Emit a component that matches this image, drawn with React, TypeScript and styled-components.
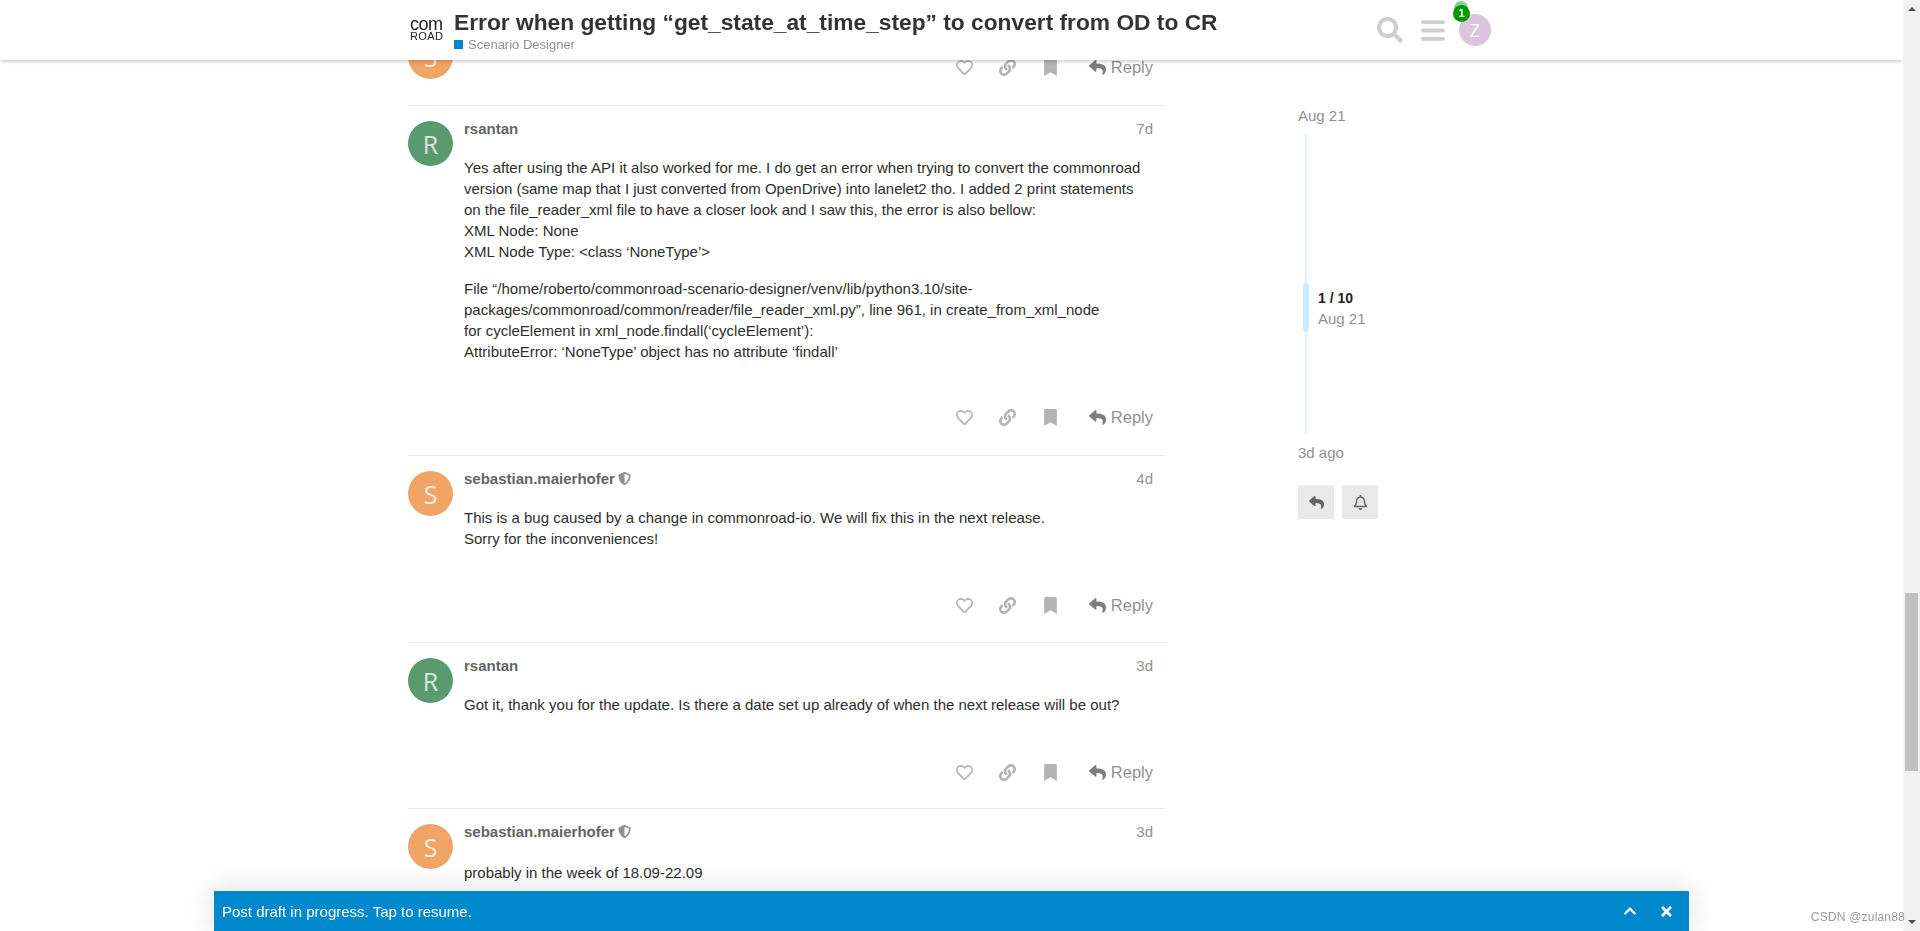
import React from "react";
import styled, { createGlobalStyle } from "styled-components";
import {
  FaBars,
  FaBookmark,
  FaChevronUp,
  FaLink,
  FaRegBell,
  FaRegHeart,
  FaReply,
  FaSearch,
  FaShieldAlt,
  FaTimes,
} from "react-icons/fa";

const GlobalStyle = createGlobalStyle`
  html, body {
    margin: 0;
    height: 100%;
    overflow: hidden;
    background: #fff;
    font-family: "Liberation Sans", Arial, sans-serif;
    color: #222;
  }
`;

const Shell = styled.div`
  display: flex;
  height: 100vh;
  overflow: hidden;
`;

const Viewport = styled.div`
  flex: 1;
  min-width: 0;
  overflow: hidden;
`;

const Page = styled.div`
  display: flex;
  align-items: flex-start;
  padding: 18px 0 0 408px;
`;

const Header = styled.header`
  position: fixed;
  top: 0;
  left: 0;
  right: 17px;
  height: 60px;
  z-index: 5;
  display: flex;
  align-items: center;
  padding-left: 408px;
  background: #fff;
  box-shadow: 0 2px 4px -1px rgba(0, 0, 0, 0.25);
`;

const Logo = styled.svg`
  width: 46px;
  height: 30px;
  flex: none;
`;

const TitleBlock = styled.div`
  flex: 1;
`;

const Title = styled.div`
  font-size: 22.75px;
  font-weight: 700;
  line-height: 28px;
  color: #333;
`;

const Category = styled.div`
  display: flex;
  align-items: center;
  gap: 5px;
  font-size: 13px;
  line-height: 17px;
  color: #919191;
`;

const CategorySwatch = styled.span`
  width: 9px;
  height: 9px;
  background: #0088cc;
`;

const HeaderIcons = styled.div`
  display: flex;
  align-items: center;
  margin-right: 412px;
  color: #cfcfcf;
`;

const SearchButton = styled(FaSearch)`
  width: 26px;
  height: 26px;
  margin-right: 18px;
`;

const MenuButton = styled(FaBars)`
  width: 24px;
  height: 27px;
  margin-right: 14px;
`;

const UserAvatar = styled.div`
  position: relative;
  width: 32px;
  height: 32px;
  border-radius: 50%;
  background: #dcc3de;
  color: #fff;
  display: flex;
  align-items: center;
  justify-content: center;
  font-family: "Open Sans", sans-serif;
  font-size: 18px;
`;

const BadgeGlow = styled.span`
  position: absolute;
  top: -13px;
  left: -5px;
  width: 14px;
  height: 14px;
  border-radius: 50%;
  background: #8fce8f;
`;

const Badge = styled.span`
  position: absolute;
  top: -9px;
  left: -6px;
  width: 17px;
  height: 17px;
  border-radius: 50%;
  background: #009900;
  color: #fff;
  font-family: "Liberation Sans", sans-serif;
  font-size: 11px;
  font-weight: 700;
  line-height: 17px;
  text-align: center;
`;

const PostList = styled.main`
  width: 758px;
  flex: none;
`;

const Post = styled.article<{ $first?: boolean }>`
  display: flex;
  gap: 11px;
  padding: ${(p) => (p.$first ? "16px 13px 18px 0" : "15px 13px 19px 0")};
  border-top: ${(p) => (p.$first ? "none" : "1px solid #e9e9e9")};
`;

const Avatar = styled.div<{ $color: string }>`
  width: 45px;
  height: 45px;
  flex: none;
  border-radius: 50%;
  background: ${(p) => p.$color};
  color: rgba(255, 255, 255, 0.8);
  display: flex;
  align-items: center;
  justify-content: center;
  font-family: "Open Sans", sans-serif;
  font-size: 25px;
`;

const PostBody = styled.div`
  flex: 1;
  min-width: 0;
`;

const PostMeta = styled.div<{ $after?: number }>`
  display: flex;
  align-items: center;
  justify-content: space-between;
  height: 14px;
  margin-bottom: ${(p) => p.$after ?? 22}px;
`;

const Author = styled.div`
  display: flex;
  align-items: center;
  gap: 3px;
  font-size: 15px;
  font-weight: 700;
  color: #646464;
`;

const StaffShield = styled(FaShieldAlt)`
  width: 13px;
  height: 13px;
  color: #919191;
`;

const PostDate = styled.span`
  font-size: 15px;
  color: #919191;
`;

const Cooked = styled.div<{ $gap?: number }>`
  font-size: 15px;
  line-height: 21px;
  color: #2e2e2e;
  margin-bottom: ${(p) => 34 + (p.$gap ?? 0)}px;

  p {
    margin: 0 0 16px;
  }

  p:last-child {
    margin-bottom: 0;
  }
`;

const Actions = styled.div<{ $top?: number; $bottom?: number }>`
  display: flex;
  align-items: center;
  justify-content: flex-end;
  height: 40px;
  margin-top: ${(p) => p.$top ?? 0}px;
  margin-bottom: ${(p) => p.$bottom ?? 0}px;
  color: #b4b4b4;
`;

const LikeIcon = styled(FaRegHeart)`
  width: 17px;
  height: 17px;
  margin-right: 26px;
`;

const LinkIcon = styled(FaLink)`
  width: 17px;
  height: 17px;
  margin-right: 28px;
`;

const BookmarkIcon = styled(FaBookmark)`
  width: 13px;
  height: 17px;
  margin-right: 32px;
`;

const ReplyButton = styled.div`
  display: flex;
  align-items: center;
  gap: 5px;
  font-size: 16.5px;
  color: #919191;
`;

const ReplyIcon = styled(FaReply)`
  width: 17px;
  height: 17px;
  color: #7d7d7d;
`;

const Timeline = styled.aside`
  margin: 87px 0 0 132px;
  width: 160px;
  font-size: 15px;
  line-height: 21px;
  color: #919191;
`;

const Rail = styled.div`
  position: relative;
  width: 2px;
  height: 299px;
  margin: 8px 0 9px 7px;
  background: #dcf1fb;
`;

const RailHandle = styled.div`
  position: absolute;
  top: 149px;
  left: -2px;
  width: 6px;
  height: 49px;
  border-radius: 3px;
  background: #c9edff;
`;

const RailLabel = styled.div`
  position: absolute;
  top: 154px;
  left: 13px;
  white-space: nowrap;
`;

const RailCount = styled.div`
  font-size: 14px;
  line-height: 20px;
  font-weight: 700;
  color: #222;
`;

const TimelineButtons = styled.div`
  display: flex;
  gap: 8px;
  margin-top: 22px;
`;

const TimelineButton = styled.div`
  width: 36px;
  height: 34px;
  display: flex;
  align-items: center;
  justify-content: center;
  background: #e9e9e9;
  color: #646464;

  svg {
    width: 15px;
    height: 15px;
  }
`;

const Scrollbar = styled.div`
  position: relative;
  z-index: 7;
  width: 17px;
  flex: none;
  display: flex;
  flex-direction: column;
  align-items: center;
  background: #f1f1f1;
`;

const ArrowUp = styled.span`
  margin-top: 7px;
  border: 4px solid transparent;
  border-top: none;
  border-bottom-color: #505050;
`;

const ScrollThumb = styled.div`
  width: 13px;
  height: 178px;
  margin-top: 582px;
  background: #c1c1c1;
`;

const ArrowDown = styled.span`
  margin-top: auto;
  margin-bottom: 7px;
  border: 4px solid transparent;
  border-bottom: none;
  border-top-color: #505050;
`;

const DraftBar = styled.div`
  position: fixed;
  left: 214px;
  bottom: 0;
  z-index: 6;
  width: 1475px;
  height: 40px;
  box-sizing: border-box;
  display: flex;
  align-items: center;
  padding: 0 15px 0 8px;
  background: #0088cc;
  color: #fff;
  font-size: 15px;
  box-shadow: 0 0 30px rgba(0, 0, 0, 0.15);
`;

const DraftText = styled.span`
  flex: 1;
`;

const DraftToggle = styled(FaChevronUp)`
  width: 14px;
  height: 14px;
  margin-right: 22px;
`;

const DraftClose = styled(FaTimes)`
  width: 15px;
  height: 15px;
`;

const Watermark = styled.div`
  position: fixed;
  right: 15px;
  bottom: 7px;
  z-index: 8;
  font-size: 12px;
  letter-spacing: 0.2px;
  color: #999;
`;

const AVATAR_ORANGE = "#f0a566";
const AVATAR_GREEN = "#5a9a6f";

const PostActions = ({ top, bottom }: { top?: number; bottom?: number }) => (
  <Actions $top={top} $bottom={bottom}>
    <LikeIcon />
    <LinkIcon />
    <BookmarkIcon />
    <ReplyButton>
      <ReplyIcon />
      Reply
    </ReplyButton>
  </Actions>
);

const Meta = ({ name, date, staff, after }: { name: string; date: string; staff?: boolean; after?: number }) => (
  <PostMeta $after={after}>
    <Author>
      {name}
      {staff && <StaffShield />}
    </Author>
    <PostDate>{date}</PostDate>
  </PostMeta>
);

const App = () => {
  return (
    <Shell>
      <GlobalStyle />
      <Viewport>
        <Header>
          <Logo viewBox="0 0 46 30">
            <text x="2" y="15" fontFamily="Liberation Sans" fontSize="18" textLength="33" fill="#222">
              com
            </text>
            <text x="2" y="25" fontFamily="Liberation Sans" fontSize="11" textLength="33" fill="#222">
              ROAD
            </text>
          </Logo>
          <TitleBlock>
            <Title>Error when getting “get_state_at_time_step” to convert from OD to CR</Title>
            <Category>
              <CategorySwatch />
              Scenario Designer
            </Category>
          </TitleBlock>
          <HeaderIcons>
            <SearchButton />
            <MenuButton />
            <UserAvatar>
              Z
              <BadgeGlow />
              <Badge>1</Badge>
            </UserAvatar>
          </HeaderIcons>
        </Header>
        <Page>
          <PostList>
            <Post $first>
              <Avatar $color={AVATAR_ORANGE}>S</Avatar>
              <PostBody>
                <PostActions top={13} />
              </PostBody>
            </Post>
            <Post>
              <Avatar $color={AVATAR_GREEN}>R</Avatar>
              <PostBody>
                <Meta name="rsantan" date="7d" />
                <Cooked $gap={1}>
                  <p>
                    Yes after using the API it also worked for me. I do get an error when trying to convert the commonroad
                    <br />
                    version (same map that I just converted from OpenDrive) into lanelet2 tho. I added 2 print statements
                    <br />
                    on the file_reader_xml file to have a closer look and I saw this, the error is also bellow:
                    <br />
                    XML Node: None
                    <br />
                    XML Node Type: {"<class ‘NoneType’>"}
                  </p>
                  <p>
                    File “/home/roberto/commonroad-scenario-designer/venv/lib/python3.10/site-
                    <br />
                    packages/commonroad/common/reader/file_reader_xml.py”, line 961, in create_from_xml_node
                    <br />
                    for cycleElement in xml_node.findall(‘cycleElement’):
                    <br />
                    AttributeError: ‘NoneType’ object has no attribute ‘findall’
                  </p>
                </Cooked>
                <PostActions bottom={-1} />
              </PostBody>
            </Post>
            <Post>
              <Avatar $color={AVATAR_ORANGE}>S</Avatar>
              <PostBody>
                <Meta name="sebastian.maierhofer" date="4d" staff />
                <Cooked $gap={2}>
                  <p>
                    This is a bug caused by a change in commonroad-io. We will fix this in the next release.
                    <br />
                    Sorry for the inconveniences!
                  </p>
                </Cooked>
                <PostActions bottom={-2} />
              </PostBody>
            </Post>
            <Post>
              <Avatar $color={AVATAR_GREEN}>R</Avatar>
              <PostBody>
                <Meta name="rsantan" date="3d" />
                <Cooked $gap={3}>
                  <p>Got it, thank you for the update. Is there a date set up already of when the next release will be out?</p>
                </Cooked>
                <PostActions bottom={-3} />
              </PostBody>
            </Post>
            <Post>
              <Avatar $color={AVATAR_ORANGE}>S</Avatar>
              <PostBody>
                <Meta name="sebastian.maierhofer" date="3d" staff after={24} />
                <Cooked>
                  <p>probably in the week of 18.09-22.09</p>
                </Cooked>
              </PostBody>
            </Post>
          </PostList>
          <Timeline>
            <div>Aug 21</div>
            <Rail>
              <RailHandle />
              <RailLabel>
                <RailCount>1 / 10</RailCount>
                Aug 21
              </RailLabel>
            </Rail>
            <div>3d ago</div>
            <TimelineButtons>
              <TimelineButton>
                <FaReply />
              </TimelineButton>
              <TimelineButton>
                <FaRegBell />
              </TimelineButton>
            </TimelineButtons>
          </Timeline>
        </Page>
      </Viewport>
      <Scrollbar>
        <ArrowUp />
        <ScrollThumb />
        <ArrowDown />
      </Scrollbar>
      <DraftBar>
        <DraftText>Post draft in progress. Tap to resume.</DraftText>
        <DraftToggle />
        <DraftClose />
      </DraftBar>
      <Watermark>CSDN @zulan88</Watermark>
    </Shell>
  );
};

export default App;
